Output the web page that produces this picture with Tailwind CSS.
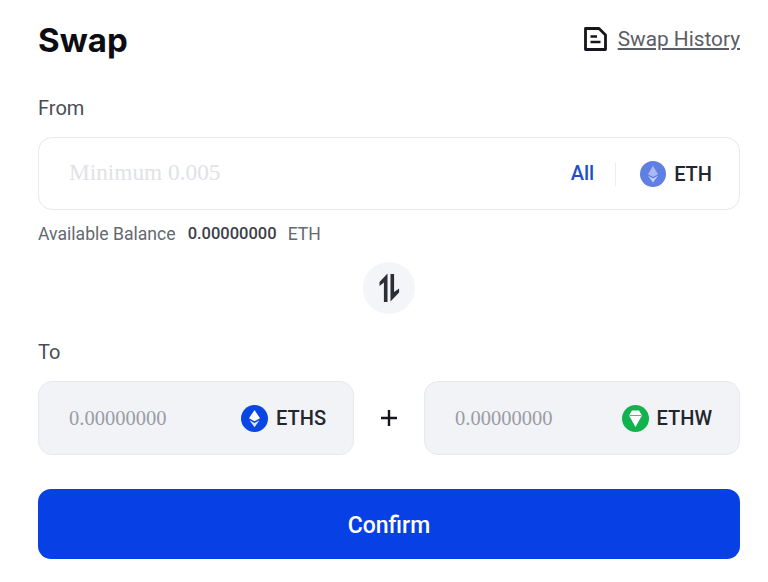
<!DOCTYPE html>
<html lang="en">

<head>
    <meta charset="UTF-8" />
    <title>Swap</title>
    <script src="https://cdn.jsdelivr.net/npm/@tailwindcss/browser@4"></script>
</head>

<body class="bg-white font-['Roboto',sans-serif] w-[768px] h-[582px] overflow-hidden">
    <div class="pl-[38px] pr-[28px] pt-[21px]">
        <!-- Header -->
        <div class="flex items-center justify-between h-[38px]">
            <h1 class="font-['Inter',sans-serif] text-[33px] font-bold leading-[38px] text-[#0b0d12] tracking-[0.1px]">Swap</h1>
            <a class="flex items-center gap-[11px] text-[20.8px] leading-[24px] text-[#5a5d66] underline underline-offset-2 -mt-[3px]">
                <svg class="w-[23px] h-[24px]" viewBox="0 0 23 24" fill="none" stroke="#14161c" stroke-width="2.8">
                    <path d="M1.500 1.500h13.500l6.500 6.500v14.500h-20z" stroke-linejoin="round" />
                    <path d="M6.500 9.500h6.500M6.500 15h10" stroke-width="2.400" />
                </svg>
                <span>Swap History</span>
            </a>
        </div>

        <!-- From -->
        <p class="mt-[37px] text-[20px] leading-[24px] text-[#4a4d55]">From</p>
        <div class="mt-[17px] h-[73px] rounded-[14px] border border-[#e6e8ec] flex items-center pl-[30px] pr-[27px]">
            <span class="flex-1 font-['Liberation_Serif',serif] text-[23.300px] text-[#dfe2e8] -mt-[2px]">Minimum 0.005</span>
            <span class="text-[20px] font-medium text-[#1f4fc8] -mt-[2px]">All</span>
            <span class="w-px h-[24px] bg-[#eceef1] ml-[21px] mr-[24px]"></span>
            <svg class="w-[26px] h-[26px]" viewBox="0 0 27 27">
                <circle cx="13.500" cy="13.500" r="13.500" fill="#5f7fe3" />
                <path d="M13.500 5l5.200 8.700-5.200 3-5.200-3z" fill="#a9baf0" />
                <path d="M13.500 18.300l5.200-3.100-5.200 7-5.200-7z" fill="#c3cff5" />
            </svg>
            <span class="ml-[8px] text-[20px] font-medium text-[#23262d]">ETH</span>
        </div>
        <div class="mt-[13px] flex items-center text-[17.600px] leading-[22px] text-[#65686f]">
            <span>Available Balance</span>
            <span class="ml-[12px] text-[16.500px] font-medium text-[#3c3f46]">0.00000000</span>
            <span class="ml-[11px]">ETH</span>
        </div>

        <!-- Switch -->
        <div class="flex justify-center mt-[17px]">
            <div class="w-[52px] h-[52px] rounded-full bg-[#f4f5f9] flex items-center justify-center">
                <svg class="w-[22px] h-[30px]" viewBox="0 0 22 30" fill="#2b2e35">
                    <path d="M9.500 0.500v28.500h-3.600v-19.500l-4.400 3.500v-4z" />
                    <path d="M12.500 1h3.600v18l5-3.500v4l-8.600 9z" />
                </svg>
            </div>
        </div>

        <!-- To -->
        <p class="mt-[26px] text-[20px] leading-[24px] text-[#4a4d55]">To</p>
        <div class="mt-[17px] flex items-center">
            <div class="w-[316px] h-[74px] rounded-[14px] border border-[#e8e9ee] bg-[#f2f3f7] flex items-center pl-[30px] pr-[27px]">
                <span class="flex-1 font-['Liberation_Serif',serif] text-[20.500px] text-[#9a9da5]">0.00000000</span>
                <svg class="w-[27px] h-[27px]" viewBox="0 0 27 27">
                    <circle cx="13.500" cy="13.500" r="13.500" fill="#0a46e4" />
                    <path d="M13.500 5l5.500 8.300-5.500 3-5.500-3z" fill="#ffffff" />
                    <path d="M13.500 18l5-2.700-5 7-5-7z" fill="#dfe6fb" />
                </svg>
                <span class="ml-[8px] text-[20px] font-medium text-[#23262d]">ETHS</span>
            </div>
            <span class="w-[70px] flex justify-center">
                <svg class="w-[16px] h-[16px]" viewBox="0 0 16 16" fill="#14161c">
                    <path d="M6.800 0h2.400v6.800h6.800v2.400h-6.800v6.800h-2.400v-6.800h-6.800v-2.400h6.800z" />
                </svg>
            </span>
            <div class="w-[316px] h-[74px] rounded-[14px] border border-[#e8e9ee] bg-[#f2f3f7] flex items-center pl-[30px] pr-[27px]">
                <span class="flex-1 font-['Liberation_Serif',serif] text-[20.500px] text-[#9a9da5]">0.00000000</span>
                <svg class="w-[27px] h-[27px]" viewBox="0 0 27 27">
                    <circle cx="13.500" cy="13.500" r="13.500" fill="#12b24f" />
                    <path d="M10 5.500h7l3 5-6.500 11.500-6.500-11.500z" fill="#ffffff" />
                    <path d="M7.500 10.500h12" stroke="#12b24f" stroke-width="0.800" />
                </svg>
                <span class="ml-[8px] text-[20px] font-medium text-[#23262d]">ETHW</span>
            </div>
        </div>

        <!-- Confirm -->
        <button class="mt-[34px] w-full h-[70px] pt-[4px] rounded-[13px] bg-[#0740e4] text-white text-[23px] font-medium">Confirm</button>
    </div>
</body>

</html>
